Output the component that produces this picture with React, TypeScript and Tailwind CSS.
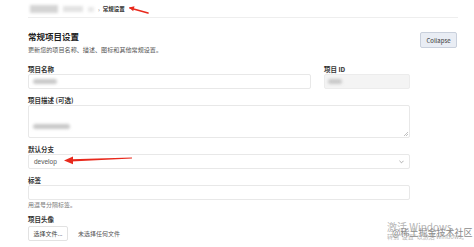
import React from "react";

const font = { fontFamily: '"Noto Sans CJK SC", "Noto Sans", sans-serif' };

const Label = ({ children }: { children: React.ReactNode }) => (
  <div className="text-[6.5px] leading-[9px] h-[9px] font-bold text-[#333]">{children}</div>
);

const Blur = ({ w }: { w: number }) => (
  <span className="inline-block h-[5px] rounded-sm bg-[#c8c8c8] blur-[1.5px]" style={{ width: w }} />
);

export default function App() {
  return (
    <div className="relative w-[474px] h-[247px] bg-white overflow-hidden" style={font}>
      {/* breadcrumb */}
      <div className="ml-[28px] w-[430px] h-[18px] border-b border-[#eeeeee] flex items-center pt-[1px]">
        <span className="ml-[2px] inline-flex items-center gap-[5px] blur-[1.5px]">
          <span className="inline-block w-[28px] h-[8px] bg-[#d4d4d4]" />
          <span className="inline-block w-[20px] h-[6px] bg-[#e2e2e2]" />
          <span className="inline-block w-[6px] h-[5px] bg-[#e8e8e8]" />
        </span>
        <span className="text-[6px] text-[#888] ml-[4px]">›</span>
        <span className="text-[5.5px] font-bold text-[#333] ml-[3px]">常规设置</span>
      </div>

      <div className="ml-[28px] w-[430px]">
        {/* title */}
        <div className="flex justify-between items-start mt-[12px]">
          <div>
            <div className="text-[8.5px] leading-[12px] font-bold text-[#222]">常规项目设置</div>
            <div className="text-[6.1px] leading-[8px] mt-[4px] text-[#555]">更新您的项目名称、描述、图标和其他常规设置。</div>
          </div>
          <button className="mt-[2px] mr-[1px] w-[37px] h-[16px] border border-[#c9d0dc] bg-[#e9edf4] rounded-[2px] text-[6px] text-[#333] flex items-center justify-center">
            Collapse
          </button>
        </div>

        {/* form */}
        <div className="w-[382px] mt-[11px] flex flex-col">
          <div className="flex gap-[13px]">
            <div className="w-[283px]">
              <Label>项目名称</Label>
              <div className="h-[15px] border border-[#e8e8e8] rounded-[2px] flex items-center px-[4px]">
                <Blur w={24} />
              </div>
            </div>
            <div className="flex-1">
              <Label>项目 ID</Label>
              <div className="h-[15px] border border-[#ececec] bg-[#f4f4f4] rounded-[2px] flex items-center px-[3px]">
                <Blur w={14} />
              </div>
            </div>
          </div>

          <div className="mt-[7px]">
            <Label>项目描述 (可选)</Label>
            <div className="relative h-[33px] border border-[#e8e8e8] rounded-[2px] px-[4px] pt-[4px]">
              <Blur w={37} />
              <svg className="absolute right-[1px] bottom-[1px]" width="5" height="5" viewBox="0 0 5 5">
                <path d="M1 5L5 1M3 5L5 3" stroke="#999" strokeWidth="0.6" />
              </svg>
            </div>
          </div>

          <div className="mt-[7px]">
            <Label>默认分支</Label>
            <div className="h-[15px] border border-[#e8e8e8] rounded-[2px] flex items-center justify-between px-[5px]">
              <span className="text-[6.5px] text-[#555]" style={{ fontFamily: '"Liberation Sans", sans-serif' }}>develop</span>
              <svg width="5" height="4" viewBox="0 0 6 4">
                <path d="M0.5 0.5L3 3L5.5 0.5" fill="none" stroke="#888" strokeWidth="0.8" />
              </svg>
            </div>
          </div>

          <div className="mt-[7px]">
            <Label>标签</Label>
            <div className="h-[15px] border border-[#e8e8e8] rounded-[2px]" />
            <div className="mt-[1px] text-[6px] leading-[8px] text-[#777]">用逗号分隔标签。</div>
          </div>

          <div className="mt-[6px]">
            <Label>项目头像</Label>
            <div className="mt-[2px] flex items-center gap-[10px]">
              <button className="w-[40px] h-[15px] border border-[#e2e2e2] rounded-[2px] bg-white text-[6px] text-[#444]">
                选择文件...
              </button>
              <span className="text-[6px] text-[#555]">未选择任何文件</span>
            </div>
          </div>
        </div>
      </div>

      {/* red arrows */}
      <svg className="absolute left-[126px] top-[3px]" width="26" height="14" viewBox="0 0 26 14">
        <path d="M4 5L22 10" stroke="#e8291c" strokeWidth="1.6" strokeLinecap="round" />
        <path d="M3 4.6L8.5 3.2L7.2 8.2Z" fill="#e8291c" />
      </svg>
      <svg className="absolute left-[62px] top-[154px]" width="74" height="12" viewBox="0 0 74 12">
        <path d="M9 5.2L70 3.6L70 4.6L9 7.6Z" fill="#e8291c" />
        <path d="M2 6.6L11 2.6L11 10.2Z" fill="#e8291c" />
      </svg>

      {/* watermark */}
      <div className="absolute left-[387px] top-[222px] text-[#b5b5b5] leading-none">
        <div className="text-[10px]" style={{ fontFamily: '"Noto Sans CJK SC", "Liberation Sans", sans-serif' }}>激活 Windows</div>
        <div className="text-[6px] mt-[2px] whitespace-nowrap">转到"设置"以激活 Windows。</div>
      </div>
      <div className="absolute left-[392px] top-[228px] text-[9px] text-[#8a8a8a] whitespace-nowrap leading-none">@稀土掘金技术社区</div>
    </div>
  );
}
